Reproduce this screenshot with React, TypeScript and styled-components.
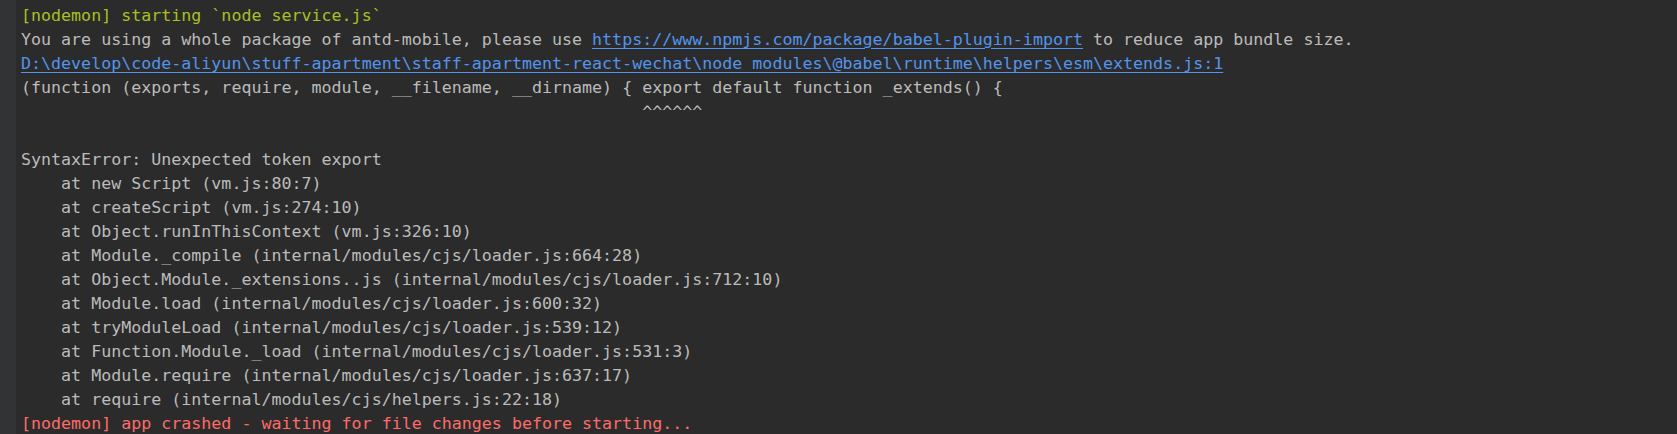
import React from "react";
import styled, { createGlobalStyle } from "styled-components";

const GlobalStyle = createGlobalStyle`
  html, body {
    margin: 0;
    padding: 0;
    background: #2b2b2b;
  }
  body {
    overflow: hidden;
  }
`;

const Console = styled.div`
  display: flex;
  width: 1677px;
  height: 434px;
  background: #2b2b2b;
  overflow: hidden;
`;

const Gutter = styled.div`
  flex: 0 0 16px;
  background: #313335;
`;

const Output = styled.div`
  flex: 1;
  padding: 4px 0 0 5px;
  font-family: "DejaVu Sans Mono", "Liberation Mono", monospace;
  font-size: 16.65px;
  line-height: 24px;
  color: #bbbbbb;
`;

type Tone = "plain" | "info" | "error";

const toneColor: Record<Tone, string> = {
  plain: "#bbbbbb",
  info: "#a8c023",
  error: "#ff6b68",
};

const Line = styled.div<{ $tone?: Tone }>`
  white-space: pre;
  height: 24px;
  color: ${(p) => toneColor[p.$tone ?? "plain"]};
`;

const Link = styled.span`
  color: #5394ec;
  text-decoration: underline;
  text-underline-offset: 3px;
`;

const stack = [
  "new Script (vm.js:80:7)",
  "createScript (vm.js:274:10)",
  "Object.runInThisContext (vm.js:326:10)",
  "Module._compile (internal/modules/cjs/loader.js:664:28)",
  "Object.Module._extensions..js (internal/modules/cjs/loader.js:712:10)",
  "Module.load (internal/modules/cjs/loader.js:600:32)",
  "tryModuleLoad (internal/modules/cjs/loader.js:539:12)",
  "Function.Module._load (internal/modules/cjs/loader.js:531:3)",
  "Module.require (internal/modules/cjs/loader.js:637:17)",
  "require (internal/modules/cjs/helpers.js:22:18)",
];

export default function App() {
  return (
    <>
      <GlobalStyle />
      <Console>
        <Gutter />
        <Output>
          <Line $tone="info">[nodemon] starting `node service.js`</Line>
          <Line>
            You are using a whole package of antd-mobile, please use{" "}
            <Link>https://www.npmjs.com/package/babel-plugin-import</Link> to reduce app bundle size.
          </Line>
          <Line>
            <Link>
              D:\develop\code-aliyun\stuff-apartment\staff-apartment-react-wechat\node_modules\@babel\runtime\helpers\esm\extends.js:1
            </Link>
          </Line>
          <Line>
            (function (exports, require, module, __filename, __dirname) {"{"} export default function _extends() {"{"}
          </Line>
          <Line>{"                                                              ^^^^^^"}</Line>
          <Line> </Line>
          <Line>SyntaxError: Unexpected token export</Line>
          {stack.map((s) => (
            <Line key={s}>{"    at " + s}</Line>
          ))}
          <Line $tone="error">[nodemon] app crashed - waiting for file changes before starting...</Line>
        </Output>
      </Console>
    </>
  );
}
